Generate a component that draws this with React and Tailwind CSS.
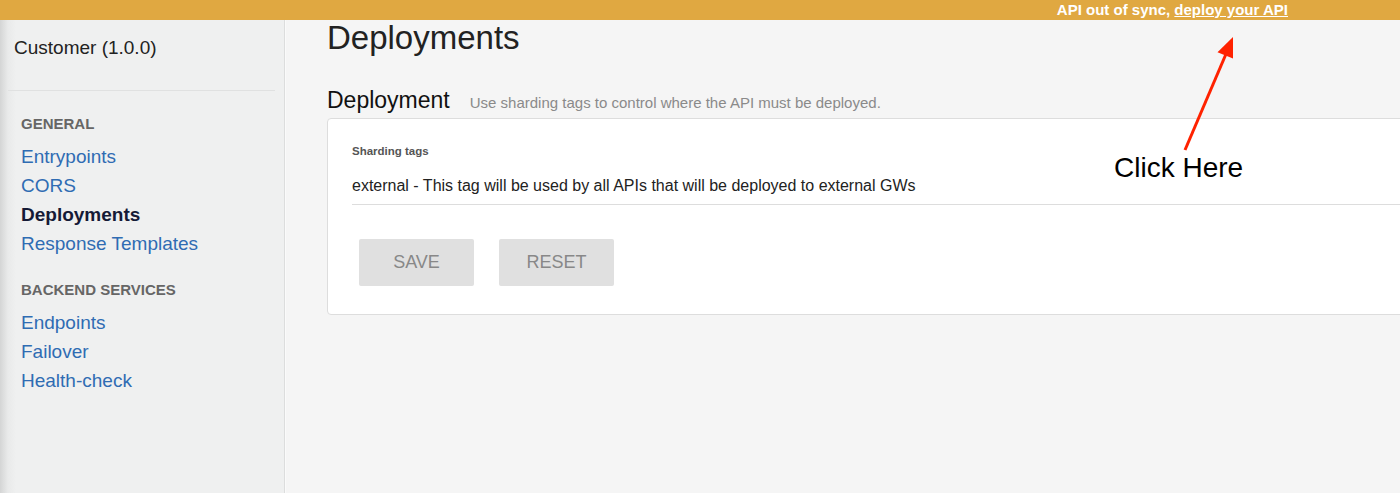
import React from "react";

const linkCls = "block h-[29px] leading-[29px] text-[19px] text-[#2f6cb3]";

export default function App() {
  return (
    <div className="relative h-[493px] w-[1400px] overflow-hidden flex flex-col font-['Liberation_Sans',Arial,sans-serif] bg-[#f5f5f5]">
      <div className="h-[20px] shrink-0 bg-[#e0a841] flex items-center justify-end pr-[112px] text-white text-[15px] font-bold leading-[20px]">
        <span>
          API out of sync, <span className="underline">deploy your API</span>
        </span>
      </div>
      <div className="flex flex-1 min-h-0">
        <aside className="w-[285px] shrink-0 border-r border-[#dcdddd] bg-[linear-gradient(to_right,#d4d5d5_0px,#e9eaea_8px,#eff0f0_16px)]">
          <div className="pl-[14px] pt-[14px] h-[28px] leading-[28px] text-[19px] text-[#222] box-content">
            Customer (1.0.0)
          </div>
          <div className="mt-[28px] ml-[8px] w-[267px] border-t border-[#e0e1e1]" />
          <div className="pl-[21px] pt-[23px]">
            <div className="h-[20px] leading-[20px] text-[15px] font-bold text-[#666] mb-[8px]">GENERAL</div>
            <a className={linkCls}>Entrypoints</a>
            <a className={linkCls}>CORS</a>
            <a className="block h-[29px] leading-[29px] text-[19px] font-bold text-[#151a36]">Deployments</a>
            <a className={linkCls}>Response Templates</a>
            <div className="mt-[22px] h-[20px] leading-[20px] text-[15px] font-bold text-[#666] mb-[8px]">BACKEND SERVICES</div>
            <a className={linkCls}>Endpoints</a>
            <a className={linkCls}>Failover</a>
            <a className={linkCls}>Health-check</a>
          </div>
        </aside>
        <main className="flex-1 min-w-0 overflow-hidden pl-[41px] border-l border-[#fafafa]">
          <h1 className="h-[36px] leading-[36px] text-[33px] text-[#222]">Deployments</h1>
          <div className="mt-[30px] h-[28px] flex items-baseline gap-[20px]">
            <h2 className="text-[23px] leading-[28px] text-[#111]">Deployment</h2>
            <span className="text-[15px] text-[#8a8a8a]">Use sharding tags to control where the API must be deployed.</span>
          </div>
          <div className="mt-[4px] w-[1120px] bg-white border border-[#dddddd] rounded-[4px] pl-[24px] pt-[24px] pb-[28px]">
            <div className="h-[16px] leading-[16px] text-[11.5px] font-bold text-[#555]">Sharding tags</div>
            <div className="mt-[16px] h-[22px] leading-[22px] text-[16px] text-[#222]">
              external - This tag will be used by all APIs that will be deployed to external GWs
            </div>
            <div className="mt-[7px] border-t border-[#dddddd]" />
            <div className="mt-[34px] ml-[7px] flex gap-[25px]">
              <button className="w-[115px] h-[47px] bg-[#e0e0e0] rounded-[2px] text-[18px] text-[#888]">SAVE</button>
              <button className="w-[115px] h-[47px] bg-[#e0e0e0] rounded-[2px] text-[18px] text-[#888]">RESET</button>
            </div>
          </div>
        </main>
      </div>
      <svg className="absolute left-0 top-0 pointer-events-none" width="1400" height="493">
        <line x1="1185" y1="150" x2="1226" y2="54" stroke="#ff2200" strokeWidth="3" />
        <polygon points="1233,37 1233,58.5 1217.5,52.3" fill="#ff2200" />
      </svg>
      <div className="absolute left-[1114px] top-[152px] leading-[32px] text-[28px] text-black font-['Liberation_Sans',Arial,sans-serif]">
        Click Here
      </div>
    </div>
  );
}
